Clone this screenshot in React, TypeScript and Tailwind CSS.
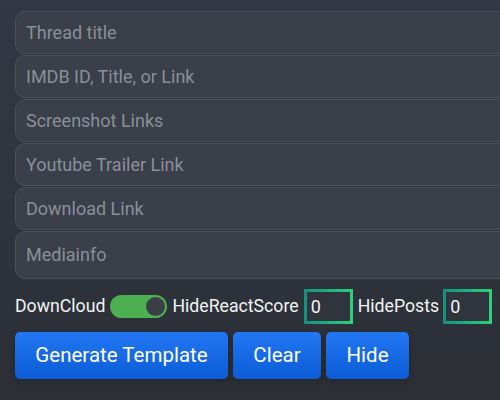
import React from "react";

const fields = [
  "Thread title",
  "IMDB ID, Title, or Link",
  "Screenshot Links",
  "Youtube Trailer Link",
  "Download Link",
];

function ScoreBox({ value }: { value: string }) {
  return (
    <div className="p-[3px] bg-gradient-to-r from-[#15907f] to-[#2ed27a]">
      <input
        readOnly
        value={value}
        className="block w-[43px] h-[29px] bg-[#30343c] text-[#f1f3f5] text-[18px] px-[4px] outline-none"
      />
    </div>
  );
}

export default function App() {
  return (
    <div className="w-[500px] h-[400px] overflow-hidden bg-gradient-to-b from-[#323844] to-[#2c2f36] pl-[15px] pt-[11px] font-['Roboto',sans-serif]">
      <div className="w-[510px] flex flex-col gap-[1px]">
        {fields.map((f) => (
          <input
            key={f}
            placeholder={f}
            className="h-[43px] rounded-[10px] border border-[#4b515c] bg-[#3a3f49] px-[10px] text-[18px] text-white placeholder:text-[#8a8f99] outline-none"
          />
        ))}
        <textarea
          placeholder="Mediainfo"
          className="h-[48px] resize-none rounded-[10px] border border-[#4b515c] bg-[#3a3f49] px-[10px] pt-[12px] text-[18px] leading-[22px] text-white placeholder:text-[#8a8f99] outline-none"
        />
      </div>

      <div className="mt-[10px] flex items-center text-[17.7px] text-[#f1f3f5]">
        <span>DownCloud</span>
        <div className="ml-[5px] w-[57px] h-[23px] rounded-full bg-[#4caf50] flex items-center justify-end pr-[2px]">
          <div className="w-[19px] h-[19px] rounded-full bg-[#3b3e46]" />
        </div>
        <span className="ml-[5px]">HideReactScore</span>
        <div className="ml-[5px]">
          <ScoreBox value="0" />
        </div>
        <span className="ml-[5px]">HidePosts</span>
        <div className="ml-[4px]">
          <ScoreBox value="0" />
        </div>
      </div>

      <div className="mt-[8px] flex gap-[5px]">
        {[
          ["Generate Template", "w-[213px]"],
          ["Clear", "w-[88px]"],
          ["Hide", "w-[83px]"],
        ].map(([label, w]) => (
          <button
            key={label}
            className={`${w} h-[47px] rounded-[5px] bg-gradient-to-b from-[#2277f2] to-[#0b5cd6] text-white text-[20.5px] shadow-[0_2px_6px_rgba(0,0,0,0.25)]`}
          >
            {label}
          </button>
        ))}
      </div>
    </div>
  );
}
